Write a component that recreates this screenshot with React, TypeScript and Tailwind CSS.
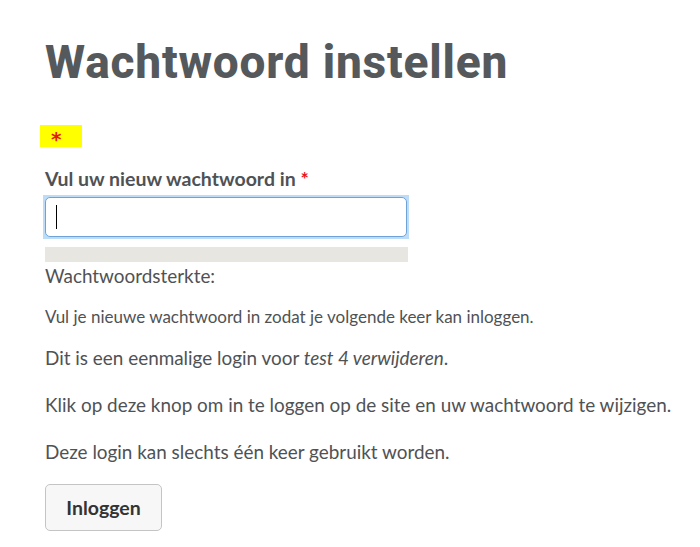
export default function App() {
  return (
    <div className="min-h-[547px] bg-white pl-[45px] pt-[34px] text-[#4f5255] font-['Lato','Noto_Sans',sans-serif]">
      <h1 className="text-[46px] leading-[56px] font-extrabold tracking-[0.8px] text-[#55595c] font-['Roboto','Noto_Sans',sans-serif]">
        Wachtwoord instellen
      </h1>

      <div className="mt-[35px] -ml-[5px] flex h-[22px] w-[42px] items-center bg-[#ffff00] pl-[11px] pt-[6px] font-['DejaVu_Sans',sans-serif] text-[20px] font-bold leading-none text-[#e8161b]">
        *
      </div>

      <form className="mt-[20px]" onSubmit={(e) => e.preventDefault()}>
        <label htmlFor="pass" className="block text-[19.5px] leading-[24px] font-bold text-[#4f5255]">
          Vul uw nieuw wachtwoord in <span className="text-[#e8161b]">*</span>
        </label>
        {/* focus ring around the field */}
        <div className="relative mt-[4px] -ml-[2px] w-[366px] bg-[#bcdcf7] p-[2px]">
          <input
            id="pass"
            type="password"
            autoFocus
            className="block h-[40px] w-full rounded-[5px] border border-[#6fa3d8] bg-white px-3 caret-transparent outline-none"
          />
          <span className="pointer-events-none absolute left-[13px] top-[10px] h-[24px] w-px bg-black" />
        </div>
        <div className="mt-[8px] h-[15px] w-[363px] bg-[#e8e6e1]" />
        <p className="mt-[2px] text-[18.9px] leading-[24px]">Wachtwoordsterkte:</p>
        <p className="mt-[18px] text-[17px] leading-[22px]">
          Vul je nieuwe wachtwoord in zodat je volgende keer kan inloggen.
        </p>
      </form>

      <div className="mt-[18px] flex flex-col gap-[23px] text-[18.9px] leading-[24px]">
        <p>
          Dit is een eenmalige login voor <em>test 4 verwijderen</em>.
        </p>
        <p>Klik op deze knop om in te loggen op de site en uw wachtwoord te wijzigen.</p>
        <p>Deze login kan slechts één keer gebruikt worden.</p>
      </div>

      <button
        type="button"
        className="mt-[20px] h-[47px] w-[117px] rounded-[5px] border border-[#c4c4c4] bg-[#f7f7f7] text-[19.5px] font-bold text-[#333]"
      >
        Inloggen
      </button>
    </div>
  );
}
